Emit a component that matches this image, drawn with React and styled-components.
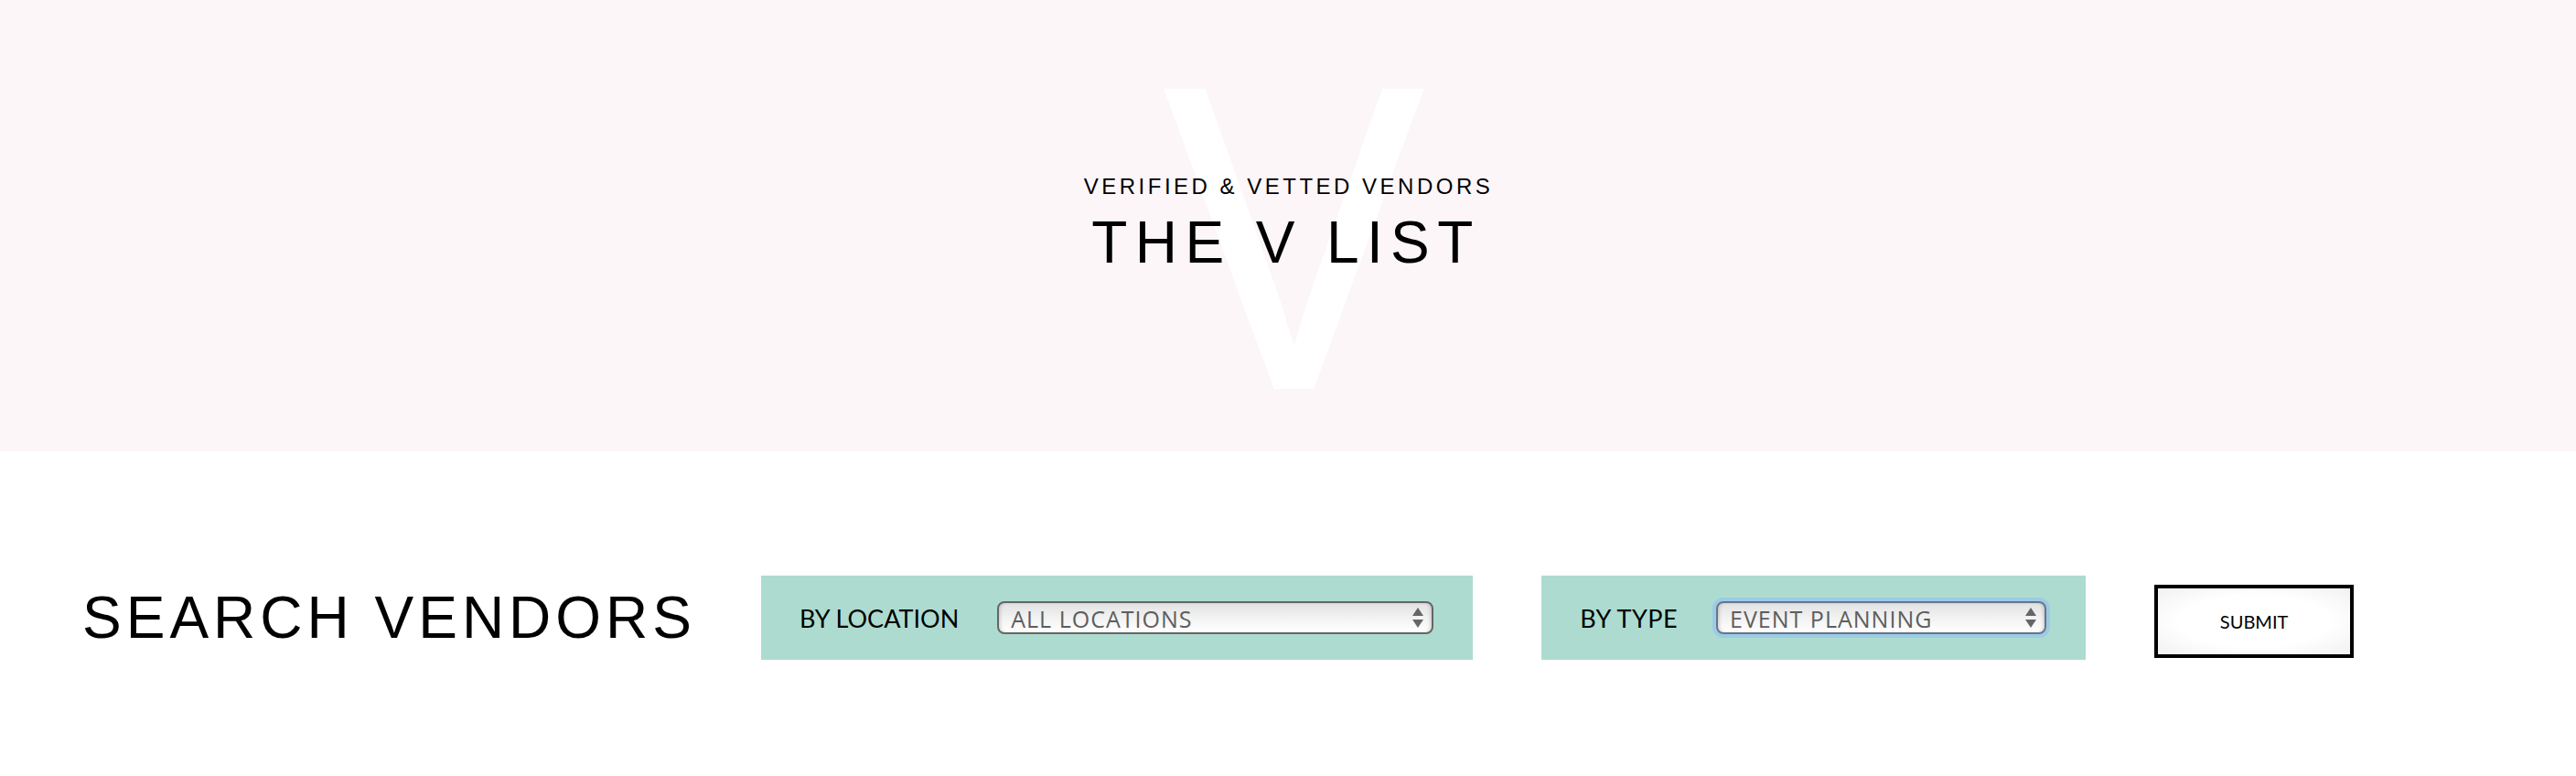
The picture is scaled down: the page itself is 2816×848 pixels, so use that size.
import React, {useState} from 'react';
import styled, {createGlobalStyle} from 'styled-components';

const GlobalStyle = createGlobalStyle`
    body {
        margin : 0;
        background : #ffffff;
        font-family : "Liberation Sans", Arial, sans-serif;
    }
`;

const App = () => {
    const [location, setLocation] = useState("all");
    const [type, setType] = useState("event");

    const submitHandler = e => {
        e.preventDefault();
    }

    return (
        <>
        <GlobalStyle />
        <Hero>
            <BigLetter aria-hidden="true">V</BigLetter>
            <HeroText>
                <Tagline>VERIFIED &amp; VETTED VENDORS</Tagline>
                <Title>THE V LIST</Title>
            </HeroText>
        </Hero>

        <SearchSection>
            <SearchForm onSubmit = {submitHandler}>
                <SearchTitle>SEARCH VENDORS</SearchTitle>

                <FilterBox>
                    <FilterLabel>BY LOCATION</FilterLabel>
                    <SelectWrap width = {477}>
                        <Select value = {location} onChange = {e => setLocation(e.target.value)}>
                            <option value="all">ALL LOCATIONS</option>
                            <option value="ny">NEW YORK</option>
                            <option value="la">LOS ANGELES</option>
                        </Select>
                        <Arrows />
                    </SelectWrap>
                </FilterBox>

                <FilterBox>
                    <FilterLabel wide>BY TYPE</FilterLabel>
                    <SelectWrap width = {361} focused>
                        <Select focused value = {type} onChange = {e => setType(e.target.value)}>
                            <option value="event">EVENT PLANNING</option>
                            <option value="floral">FLORAL</option>
                            <option value="catering">CATERING</option>
                        </Select>
                        <Arrows />
                    </SelectWrap>
                </FilterBox>

                <SubmitButton type = "submit">SUBMIT</SubmitButton>
            </SearchForm>
        </SearchSection>
        </>
    );
}

const Arrows = () => (
    <ArrowIcon width="12" height="22" viewBox="0 0 12 22">
        <path d="M6 0 L12 9 L0 9 Z" fill="#666666" />
        <path d="M0 13 L12 13 L6 22 Z" fill="#666666" />
    </ArrowIcon>
);

const Hero = styled.header`
    display : grid;
    justify-items : center;
    height : 493px;
    background : #fcf6f8;
    overflow : hidden;
`;

const BigLetter = styled.div`
    grid-area : 1 / 1;
    align-self : start;
    margin-top : 25px;
    font-family : "Liberation Sans", Arial, sans-serif;
    font-size : 471px;
    line-height : 1;
    color : #ffffff;
    transform : scaleX(0.9);
    padding-left : 14px;
    -webkit-text-stroke : 4px #ffffff;
    user-select : none;
`;

const HeroText = styled.div`
    grid-area : 1 / 1;
    align-self : start;
    margin-top : 192px;
    display : flex;
    flex-direction : column;
    align-items : center;
    position : relative;
    color : #000000;
`;

const Tagline = styled.div`
    font-size : 24px;
    line-height : 1;
    letter-spacing : 3.5px;
    padding-left : 1px;
`;

const Title = styled.h1`
    margin : 17px 0 0 0;
    font-size : 64px;
    font-weight : normal;
    line-height : 1;
    letter-spacing : 8.4px;
    margin-right : 4px;
`;

const SearchSection = styled.section`
    height : 355px;
    padding-top : 136px;
    box-sizing : border-box;
`;

const SearchForm = styled.form`
    display : flex;
    align-items : center;
    gap : 75px;
    height : 92px;
    padding-left : 90px;
`;

const SearchTitle = styled.h2`
    margin : 0 -4px 0 0;
    font-size : 64px;
    font-weight : normal;
    line-height : 1;
    letter-spacing : 5px;
    white-space : nowrap;
`;

const FilterBox = styled.div`
    display : flex;
    align-items : center;
    gap : 42px;
    height : 92px;
    padding : 0 43px 0 42px;
    background : #addbd0;
`;

const FilterLabel = styled.span`
    font-family : Lato, "Liberation Sans", sans-serif;
    font-size : 27px;
    letter-spacing : ${props => props.wide ? "0.5px" : "0"};
    color : #000000;
    white-space : nowrap;
`;

const SelectWrap = styled.div`
    position : relative;
    width : ${props => props.width}px;
    height : 36px;
    border-radius : 8px;
    box-shadow : ${props => props.focused ? "0 0 0 4px #9ccbe6" : "none"};
`;

const Select = styled.select`
    appearance : none;
    -webkit-appearance : none;
    width : 100%;
    height : 100%;
    margin : 0;
    padding : 0 36px 0 13px;
    box-sizing : border-box;
    border : 2px solid ${props => props.focused ? "#66758a" : "#666666"};
    border-radius : 8px;
    background : linear-gradient(to bottom, #e2e2e2 0%, #f2f2f2 50%, #ffffff 100%);
    box-shadow : inset 3px 0 4px -2px rgba(0, 0, 0, 0.2), inset -3px 0 4px -2px rgba(0, 0, 0, 0.2);
    font-family : "Open Sans", "Liberation Sans", sans-serif;
    font-size : 25px;
    letter-spacing : 1px;
    color : #5e5e5e;
    outline : none;
`;

const ArrowIcon = styled.svg`
    position : absolute;
    right : 11px;
    top : 7px;
    pointer-events : none;
`;

const SubmitButton = styled.button`
    width : 218px;
    height : 80px;
    margin-top : 8px;
    border : 4px solid #000000;
    background : radial-gradient(ellipse at center, #ffffff 55%, #f1f1f1 100%);
    font-family : Lato, "Liberation Sans", sans-serif;
    font-size : 20px;
    color : #000000;
    cursor : pointer;
`;

export default App
